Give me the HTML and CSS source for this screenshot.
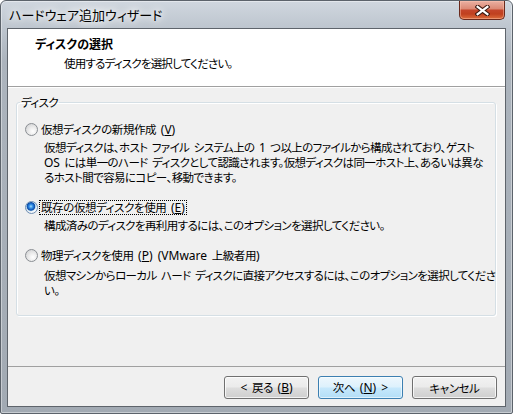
FILE: index.html
```html
<!DOCTYPE html>
<html lang="ja">
<head>
<meta charset="utf-8">
<title>ハードウェア追加ウィザード</title>
<link rel="stylesheet" href="styles.css">
</head>
<body>
<div class="window">
  <div class="titlebar">
    <span class="title">ハードウェア追加ウィザード</span>
    <button class="close" aria-label="閉じる">
      <svg width="15" height="11" viewBox="0 0 15 11">
        <path d="M2.6 1.8 L12.4 9.2 M12.4 1.8 L2.6 9.2" stroke="#3a1810" stroke-width="4.2" stroke-linecap="square" fill="none"/>
        <path d="M2.6 1.8 L12.4 9.2 M12.4 1.8 L2.6 9.2" stroke="#ffffff" stroke-width="2.2" stroke-linecap="square" fill="none"/>
      </svg>
    </button>
  </div>
  <div class="client">
    <div class="header">
      <div class="h-title">ディスクの選択</div>
      <div class="h-sub">使用するディスクを選択してください。</div>
    </div>
    <div class="body">
      <fieldset class="group">
        <legend>ディスク</legend>
        <div class="option">
          <div class="opt-row"><span class="radio"></span><span class="opt-label">仮想ディスクの新規作成 <span class="lat">(<u>V</u>)</span></span></div>
          <div class="desc">仮想ディスクは、ホスト ファイル システム上の <span class="lat">1</span> つ以上のファイルから構成されており、ゲスト<br><span class="lat">OS</span> には単一のハード ディスクとして認識されます。仮想ディスクは同一ホスト上、あるいは異な<br>るホスト間で容易にコピー、移動できます。</div>
        </div>
        <div class="option">
          <div class="opt-row"><span class="radio checked"></span><span class="opt-label focused">既存の仮想ディスクを使用 <span class="lat">(<u>E</u>)</span></span></div>
          <div class="desc">構成済みのディスクを再利用するには、このオプションを選択してください。</div>
        </div>
        <div class="option">
          <div class="opt-row"><span class="radio"></span><span class="opt-label">物理ディスクを使用 <span class="lat">(<u>P</u>) (VMware</span> 上級者用<span class="lat">)</span></span></div>
          <div class="desc">仮想マシンからローカル ハード ディスクに直接アクセスするには、このオプションを選択してくださ<br>い。</div>
        </div>
      </fieldset>
    </div>
    <div class="footer">
      <button class="btn"><span class="lat">&lt;</span> 戻る <span class="lat">(<u>B</u>)</span></button>
      <button class="btn default">次へ <span class="lat">(<u>N</u>) &gt;</span></button>
      <button class="btn">キャンセル</button>
    </div>
  </div>
</div>
</body>
</html>
```

FILE: styles.css
```css
html, body {
  margin: 0;
  padding: 0;
}

body {
  width: 513px;
  height: 414px;
  overflow: hidden;
  background: #ffffff;
  font-family: "Noto Sans", "Noto Sans CJK JP", sans-serif;
  font-size: 11.5px;
  letter-spacing: -0.6px;
  word-spacing: 2px;
  color: #000;
  font-feature-settings: "palt";
}

.lat {
  font-size: 12px;
  letter-spacing: 0;
}

.window {
  box-sizing: border-box;
  width: 513px;
  height: 414px;
  display: flex;
  flex-direction: column;
  border: 1px solid #5c636b;
  border-radius: 6px 6px 2px 2px;
  padding: 0 6px 6px;
  background: linear-gradient(to bottom, #d0d7df 0px, #bec6cf 26px, #acb4bd 60px, #a2aab3 100%);
  box-shadow: inset 0 0 0 1px rgba(255, 255, 255, 0.4);
}

.titlebar {
  height: 27px;
  display: flex;
  align-items: flex-start;
}

.title {
  margin: 4px 0 0 2px;
  font-size: 13px;
  letter-spacing: 0;
  word-spacing: 0;
  line-height: 20px;
  color: #000;
  text-shadow: 0 0 6px #fff, 0 0 10px #fff, 0 0 14px rgba(255, 255, 255, 0.9);
}

.close {
  margin-left: auto;
  margin-right: 1px;
  width: 46px;
  height: 19px;
  padding: 0;
  box-sizing: border-box;
  border: 1px solid #6a291c;
  border-top: none;
  border-radius: 0 0 5px 5px;
  background: linear-gradient(to bottom, #eab0a2 0%, #dc8a76 42%, #c4452a 52%, #c0401f 72%, #dd6d3c 100%);
  box-shadow: inset 0 0 0 1px rgba(255, 200, 180, 0.45);
  display: flex;
  align-items: center;
  justify-content: center;
}

.close svg {
  display: block;
}

.client {
  flex: 1;
  min-height: 0;
  display: flex;
  flex-direction: column;
  border: 1px solid #5e646b;
  background: #f0f0f0;
}

.header {
  box-sizing: border-box;
  height: 58px;
  padding: 8px 0 0 27px;
  background: #ffffff;
  border-bottom: 1px solid #a0a0a0;
  box-shadow: 0 1px 0 #ffffff;
  line-height: 15px;
}

.h-title {
  font-weight: bold;
  font-size: 12px;
  letter-spacing: 0;
}

.h-sub {
  margin-top: 4px;
  padding-left: 29px;
  letter-spacing: -0.8px;
}

.body {
  flex: 1;
  padding: 8px 9px 0 8px;
}

.group {
  margin: 0;
  min-width: 0;
  padding: 12px 8px 17px 8px;
  border: 1px solid #d5dfe5;
  border-radius: 3px;
  box-shadow: inset 1px 1px 0 #ffffff, 1px 1px 0 #ffffff;
}

.group legend {
  margin-left: -5px;
  padding: 0 1px;
  line-height: 15px;
}

.option + .option {
  margin-top: 15px;
}

.opt-row {
  display: flex;
  align-items: center;
  height: 15px;
}

.radio {
  flex: none;
  box-sizing: border-box;
  width: 13px;
  height: 13px;
  border-radius: 50%;
  border: 1px solid #8a8e93;
  background: radial-gradient(circle at 62% 66%, #ffffff 0, #ececec 40%, #c9cacc 100%);
}

.radio.checked {
  border-color: #6f8fb3;
  background:
    radial-gradient(circle at 45% 40%, #a9dcff 0, #3d9ae8 1.6px, #1660c4 3.2px, #0f4c9f 3.9px, rgba(170, 210, 240, 0.9) 4.6px, rgba(255, 255, 255, 0) 5.3px),
    radial-gradient(circle at 62% 66%, #ffffff 0, #eef2f6 40%, #c8ccd1 100%);
}

.opt-label {
  margin-left: 1px;
  padding: 0 1px;
  line-height: 13px;
  letter-spacing: -0.4px;
  border: 1px dotted transparent;
  white-space: nowrap;
}

.opt-label.focused {
  border-color: #000;
}

.desc {
  margin: 3px 0 0 19px;
  line-height: 15px;
  white-space: nowrap;
}

.option:last-child .desc {
  margin-top: 5px;
}

.footer {
  display: flex;
  justify-content: flex-end;
  gap: 9px;
  padding: 9px 8px 7px;
  border-top: 1px solid #a0a0a0;
}

.btn {
  box-sizing: border-box;
  width: 85px;
  height: 23px;
  padding: 0;
  font-family: "Noto Sans", "Noto Sans CJK JP", sans-serif;
  font-size: 11.5px;
  letter-spacing: -0.4px;
  word-spacing: 2px;
  font-feature-settings: "palt";
  color: #000;
  border: 1px solid #707070;
  border-radius: 3px;
  background: linear-gradient(to bottom, #f2f2f2 0%, #ebebeb 48%, #dddddd 52%, #cfcfcf 100%);
  box-shadow: inset 0 0 0 1px rgba(255, 255, 255, 0.75);
}

.btn.default {
  border-color: #3c7fb1;
  background: linear-gradient(to bottom, #edf7fd 0%, #ddf1fc 48%, #c6e8fc 52%, #b3def7 100%);
  box-shadow: inset 0 0 0 1px rgba(255, 255, 255, 0.6);
}
```
